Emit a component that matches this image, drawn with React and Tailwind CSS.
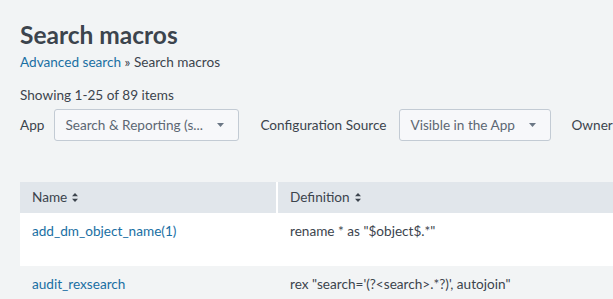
import React from 'react';

const rows = [
  { name: 'add_dm_object_name(1)', def: 'rename * as "$object$.*"', tall: true },
  { name: 'audit_rexsearch', def: 'rex "search=\'(?<search>.*?)\', autojoin"', tall: false },
];

function SortIcon() {
  return (
    <svg width="6" height="9" viewBox="0 0 6 9" className="ml-[5px] inline-block">
      <path d="M3 0 L6 3.3 H0 Z" fill="#3c444d" />
      <path d="M3 9 L6 5.7 H0 Z" fill="#3c444d" />
    </svg>
  );
}

function Caret() {
  return (
    <svg width="7" height="4" viewBox="0 0 7 4">
      <path d="M0 0 H7 L3.5 4 Z" fill="#6b7785" />
    </svg>
  );
}

function Select({ value, width }) {
  return (
    <div className={`flex h-[32px] items-center justify-between rounded-[3px] border border-[#c3cbd4] bg-[#f7f8fa] pl-[10px] pr-[14px] text-[#5c6773] ${width}`}>
      <span className="whitespace-nowrap">{value}</span>
      <Caret />
    </div>
  );
}

export default function App() {
  return (
    <div className="h-[299px] w-[613px] overflow-hidden bg-[#f2f4f5] text-[13.6px] text-[#3c444d]" style={{ fontFamily: 'Lato, "Liberation Sans", sans-serif' }}>
      <div className="pl-[20px] pt-[21px]">
        <h1 className="text-[24.5px] font-bold leading-[28px]">Search macros</h1>
        <div className="mt-[5px] leading-[16px]">
          <span className="text-[#1a6fa3]">Advanced search</span> » Search macros
        </div>
        <div className="mt-[17px] leading-[16px]">Showing 1-25 of 89 items</div>
        <div className="mt-[6px] flex items-center whitespace-nowrap">
          <span className="mr-[10px]">App</span>
          <Select value="Search & Reporting (s..." width="w-[185px]" />
          <span className="ml-[21px] mr-[13px]">Configuration Source</span>
          <Select value="Visible in the App" width="w-[152px]" />
          <span className="ml-[20px]">Owner</span>
        </div>
        <div className="mt-[41px] w-[700px]">
          <div className="flex h-[31px] items-center bg-[#e1e6eb]">
            <div className="flex h-full w-[258px] items-center border-r-2 border-white pl-[12px]">
              Name <SortIcon />
            </div>
            <div className="flex items-center pl-[12px]">
              Definition <SortIcon />
            </div>
          </div>
          {rows.map((r, i) => (
            <div key={i} className={`flex ${r.tall ? 'h-[53px]' : 'h-[40px]'} ${i % 2 === 0 ? 'bg-white' : 'bg-[#f2f4f5]'}`}>
              <div className="w-[258px] pl-[12px] pt-[8px] text-[#1a6fa3]">{r.name}</div>
              <div className="pl-[12px] pt-[8px]">{r.def}</div>
            </div>
          ))}
        </div>
      </div>
    </div>
  );
}
